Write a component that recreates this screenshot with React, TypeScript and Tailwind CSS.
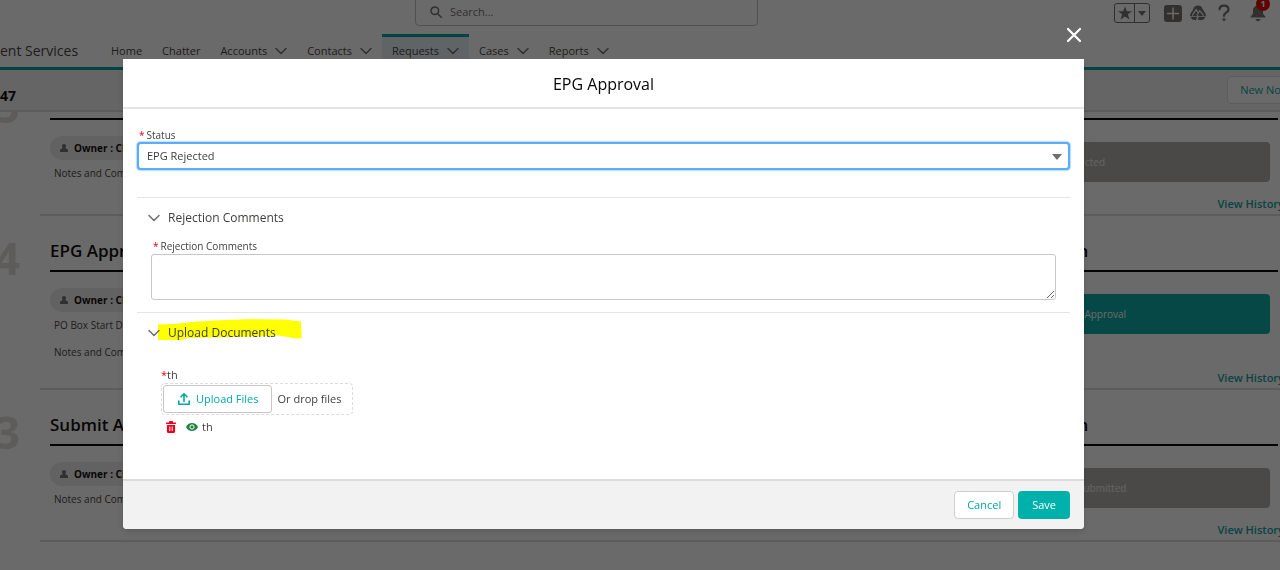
import type { ReactNode } from 'react';

const navItems = [
  { label: 'Home', menu: false },
  { label: 'Chatter', menu: false },
  { label: 'Accounts', menu: true },
  { label: 'Contacts', menu: true },
  { label: 'Requests', menu: true, active: true },
  { label: 'Cases', menu: true },
  { label: 'Reports', menu: true },
];

const steps = [
  { no: 5, title: 'EPG Review', notes: ['Notes and Comments'], action: 'Rejected', done: true },
  {
    no: 4,
    title: 'EPG Approval',
    notes: ['PO Box Start Date', 'Notes and Comments'],
    action: 'Pending Approval',
    done: false,
  },
  { no: 3, title: 'Submit Application', notes: ['Notes and Comments'], action: 'Details Submitted', done: true },
];

function Chevron({ className }: { className?: string }) {
  return (
    <svg viewBox="0 0 12 8" className={className} fill="none" stroke="currentColor" strokeWidth="1.5" strokeLinecap="round" strokeLinejoin="round">
      <path d="M1 1.5l5 5 5-5" />
    </svg>
  );
}

function SearchIcon() {
  return (
    <svg viewBox="0 0 12 12" className="size-3 shrink-0 text-[#706e6b]" fill="none" stroke="currentColor" strokeWidth="1.5" strokeLinecap="round">
      <circle cx="4.8" cy="4.8" r="3.8" />
      <path d="M7.8 7.8l3.4 3.4" />
    </svg>
  );
}

function HeaderIcons() {
  return (
    <div className="ml-auto flex items-center gap-2 pt-[3px] pr-3.5 text-[#706e6b]">
      <div className="mr-1.5 flex h-5 w-9 rounded-[3px] border border-[#706e6b]">
        <button aria-label="Favorite" className="flex flex-1 items-center justify-center border-r border-[#706e6b]">
          <svg viewBox="0 0 24 24" className="size-3.5" fill="currentColor">
            <path d="M12 .8l3.2 8H24l-7 5.4 2.7 9L12 17.9l-7.7 5.3 2.7-9-7-5.4h8.8z" />
          </svg>
        </button>
        <button aria-label="Favorites list" className="flex w-3.5 items-center justify-center">
          <svg viewBox="0 0 8 5" className="h-[5px] w-2" fill="currentColor">
            <path d="M0 0h8L4 5z" />
          </svg>
        </button>
      </div>
      <button aria-label="Add">
        <svg viewBox="0 0 18 17" className="h-[17px] w-[18px]">
          <rect width="18" height="17" rx="3" fill="currentColor" />
          <path d="M9 3v11M3.5 8.5h11" stroke="#fff" strokeWidth="1.5" strokeLinecap="round" />
        </svg>
      </button>
      <button aria-label="Guidance">
        <svg viewBox="0 0 16 16" className="size-4">
          <path d="M8 .5c2.6 0 4 1.3 4.8 3.7.5 1.7 2.6 3 3 5.3.1.8.1 1.3 0 1.7H.2c-.1-.4-.1-.9 0-1.7.4-2.3 2.5-3.6 3-5.3C4 1.800 5.400.5 8 .5z" fill="currentColor" />
          <path d="M2.2 10.6l3.9-6 2.1 3.4 1.5-2.3 4 4.9" fill="none" stroke="#fff" strokeWidth="1.1" />
          <path d="M8.2 8l-1.4 2.1 2 1-1.300 1.800" fill="none" stroke="#fff" strokeWidth=".9" />
          <path d="M.8 12h6.3l-1.3 3.3c-2.5 0-4.4-1.1-5-3.3zM15.200 12H8.700l-1.300 2.200 2.800 1.100c2.500 0 4.400-1.100 5-3.300z" fill="currentColor" />
        </svg>
      </button>
      <button aria-label="Help" className="mx-1">
        <svg viewBox="0 0 12 18" className="h-[18px] w-3" fill="none" stroke="currentColor" strokeWidth="2.2" strokeLinecap="round">
          <path d="M1.5 5.3C1.5 3 3.4 1.7 6 1.7s4.5 1.5 4.5 3.7C10.5 8.5 6 8.4 6 12" />
          <circle cx="6" cy="15.5" r=".5" fill="currentColor" />
        </svg>
      </button>
      <button aria-label="Notifications" className="relative ml-2">
        <svg viewBox="0 0 16 17" className="h-[17px] w-4" fill="currentColor">
          <path d="M8 .5c3 0 5 2.200 5 5v2.700c0 1.600 2.500 2 2.500 4.300H.5c0-2.300 2.500-2.700 2.500-4.300V5.500c0-2.800 2-5 5-5zM5.600 14h4.800c-.2 1.300-1.200 2.200-2.400 2.200S5.800 15.300 5.600 14z" />
        </svg>
        <span className="absolute -top-2 left-1.5 flex size-3.5 items-center justify-center rounded-full bg-[#e00000] text-[9px] font-bold text-white">
          1
        </span>
      </button>
    </div>
  );
}

function Step({ step }: { step: (typeof steps)[number] }) {
  return (
    <li className="flex">
      <div className="flex w-10 shrink-0 justify-end pt-3 pr-5 text-[44px] leading-[60px] font-bold text-[#dddbda]">{step.no}</div>
      <div className="flex flex-1 flex-col border-b-2 border-[#dddbda] pl-2.5">
        <div className="flex pt-[22px]">
          <div className="flex-1">
            <h2 className="border-b-2 border-black pb-1.5 text-[17px] leading-[26px] font-semibold">{step.title}</h2>
            <div className="mt-4 flex h-6 w-60 items-center gap-1.5 rounded-full bg-[#ecebea] pl-2.5 text-[10px] font-bold">
              <svg viewBox="0 0 8 8" className="size-2" fill="#706e6b">
                <path d="M4 0c1.3 0 2 .9 2 2.1 0 .9-.4 1.6-.9 2C6.5 4.6 8 5.2 8 6.5V8H0V6.5c0-1.3 1.5-1.9 2.9-2.4-.5-.4-.9-1.1-.9-2C2 .9 2.7 0 4 0z" />
              </svg>
              Owner : Client Services
            </div>
            <div className="flex flex-col pb-0.5 pl-1 text-[10px] leading-[27px] text-[#3e3e3c]">
              {step.notes.map((note) => (
                <p key={note}>{note}</p>
              ))}
            </div>
          </div>
          <div className="mr-0.5 w-[386px] pb-3">
            <h2 className="border-b-2 border-black pb-1.5 pl-36 text-[17px] leading-[26px] font-semibold">Action</h2>
            <div className="mt-[22px] px-2">
              <button className={`h-10 w-full rounded text-[10px] ${step.done ? 'bg-[#b0adab] text-[#eeeeee]' : 'bg-[#00aaa6] text-white'}`}>
                {step.action}
              </button>
            </div>
          </div>
        </div>
        <a href="#history" className="-mr-1 mt-auto self-end text-[11px] leading-5 font-semibold text-[#00a19c]">
          View History
        </a>
      </div>
    </li>
  );
}

function Label({ htmlFor, children }: { htmlFor: string; children: ReactNode }) {
  return (
    <label htmlFor={htmlFor} className="flex gap-0.5 pl-0.5 text-[10px] leading-[14px] text-[#3e3e3c]">
      <span className="text-[#e0001b]">*</span>
      {children}
    </label>
  );
}

function ApprovalDialog() {
  return (
    <div role="dialog" aria-label="EPG Approval" className="relative flex flex-col rounded-b bg-white shadow-md">
      <button aria-label="Close" className="absolute -top-8 right-0.5 text-white">
        <svg viewBox="0 0 16 16" className="size-4" fill="none" stroke="currentColor" strokeWidth="2.2" strokeLinecap="round">
          <path d="M2 2l12 12M14 2L2 14" />
        </svg>
      </button>
      <header className="border-b-2 border-[#e5e5e5] pt-[13px] pb-[11px]">
        <h1 className="text-center text-[16px] leading-6 text-[#080707]">EPG Approval</h1>
      </header>

      <div className="px-3.5 pt-[19px] pb-10">
        <Label htmlFor="status">Status</Label>
        <div className="relative">
          <select
            id="status"
            className="block h-7 w-full appearance-none rounded border-2 border-[#58aef7] bg-white px-2 text-[11px] text-[#3e3e3c] shadow-[0_0_2px_#1589ee] outline-none"
          >
            <option>EPG Rejected</option>
          </select>
          <svg viewBox="0 0 10 6" className="pointer-events-none absolute top-3 right-2 h-1.5 w-2.5" fill="#706e6b">
            <path d="M0 0h10L5 6z" />
          </svg>
        </div>

        <section className="mt-[27px] border-t border-[#e5e5e5] px-3.5 pt-2.5 pb-3">
          <h2>
            <button className="-ml-[3px] flex items-center gap-2 text-[12px] leading-5 text-[#3e3e3c]">
              <Chevron className="h-2 w-3 text-[#706e6b]" />
              Rejection Comments
            </button>
          </h2>
          <div className="pt-[11px]">
            <Label htmlFor="comments">Rejection Comments</Label>
            <textarea id="comments" className="mt-px block h-[46px] w-full rounded-[3px] border border-[#c9c7c5] outline-none" />
          </div>
        </section>

        <section className="border-t border-[#e5e5e5] px-3.5 pt-2.5">
          <h2 className="relative">
            <svg viewBox="0 0 144 22" className="absolute -top-1 left-[7px] h-[22px] w-36" fill="#ffff00">
              <path d="M0 5.5l19-.7L33 3l24-1.6L88 .2l39 .2L143 2.5l.7 16.8-6 .3-17-3-21 .8-70 1.5-6 2H0z" />
            </svg>
            <button className="relative -ml-[3px] flex items-center gap-2 text-[12px] leading-5 text-[#3e3e3c]">
              <Chevron className="h-2 w-3 text-[#706e6b]" />
              Upload Documents
            </button>
          </h2>
          <div className="flex flex-col items-start pt-6 pl-2.5 text-[11px] text-[#3e3e3c]">
            <p className="leading-4">
              <span className="text-[#e0001b]">*</span>th
            </p>
            <div className="flex items-center rounded-sm border border-dashed border-[#dddbda] p-px pr-2.5">
              <button className="flex h-7 items-center gap-1.5 rounded-[3px] border border-[#c9c7c5] px-3.5 pr-3 text-[11px] text-[#00a9a5]">
                <svg viewBox="0 0 12 12" className="size-3" fill="none" stroke="currentColor" strokeWidth="1.6" strokeLinecap="round" strokeLinejoin="round">
                  <path d="M.8 8v3.2h10.4V8M6 8.5V1M3 3.8l3-3 3 3" />
                </svg>
                Upload Files
              </button>
              <span className="pl-1.5">Or drop files</span>
            </div>
            <div className="flex h-6 items-center gap-1 pl-[5px]">
              <button aria-label="Delete file" className="mr-1.5">
                <svg viewBox="0 0 10 12" className="h-3 w-2.5" fill="#ea001e">
                  <path d="M3 1.5V.8c0-.4.3-.8.8-.8h2.4c.5 0 .8.4.8.8v.7h2.600c.2 0 .4.2.4.4v.7c0 .2-.2.4-.4.4H.4C.2 3 0 2.800 0 2.600v-.7c0-.2.2-.4.4-.4zM.9 4h8.200v6.800c0 .7-.5 1.200-1.200 1.200H2.100C1.400 12 .9 11.500.9 10.800zM3.300 5.500v4.500h1V5.500zm2.400 0v4.500h1V5.500z" fillRule="evenodd" />
                </svg>
              </button>
              <svg viewBox="0 0 12 8" className="h-2 w-3">
                <path d="M0 4C1.2 1.5 3.4 0 6 0s4.8 1.5 6 4c-1.200 2.500-3.400 4-6 4S1.200 6.500 0 4z" fill="#1f8342" />
                <circle cx="6" cy="4" r="2.1" fill="none" stroke="#fff" strokeWidth="1" />
              </svg>
              <span>th</span>
            </div>
          </div>
        </section>
      </div>

      <footer className="flex justify-end gap-1 rounded-b border-t-2 border-[#dddbda] bg-[#f3f2f2] px-3.5 py-2.5 text-[11px]">
        <button className="h-7 rounded border border-[#d0cecc] bg-white px-3 text-[#00a9a5]">Cancel</button>
        <button className="h-7 rounded bg-[#00b0ab] px-3.5 text-white">Save</button>
      </footer>
    </div>
  );
}

export default function App() {
  return (
    <div className="relative flex h-screen flex-col overflow-hidden bg-white font-['Open_Sans','Noto_Sans',sans-serif] text-[#080707]">
      <header className="relative z-10 border-b-[3px] border-[#00a19c] bg-white">
        <div className="flex h-[34px] items-start">
          <div className="w-[415px]" />
          <label className="-mt-1 flex h-[30px] w-[343px] items-center gap-2 rounded border border-[#c0bebc] pt-0.5 pl-3.5">
            <SearchIcon />
            <input type="search" aria-label="Search" placeholder="Search..." className="min-w-0 flex-1 text-[11px] outline-none placeholder:text-[#706e6b]" />
          </label>
          <HeaderIcons />
        </div>
        <nav className="flex h-[33px] items-stretch text-[11px] text-[#3e3e3c]">
          <span className="flex w-[101px] items-center text-[14px]">ent Services</span>
          {navItems.map((item) => (
            <a
              key={item.label}
              href="#nav"
              className={`flex items-center gap-2 border-t-[3px] px-2.5 pb-0.5 ${item.active ? 'border-[#00a19c] bg-[#e4f0f4]' : 'border-transparent'}`}
            >
              {item.label}
              {item.menu && <Chevron className="h-2 w-3 text-[#706e6b]" />}
            </a>
          ))}
        </nav>
      </header>

      <div className="relative z-10 flex h-[42px] shrink-0 items-center justify-between border-b-2 border-[#dddbda] bg-[#f3f3f3]">
        <span className="pt-3 text-[14px] leading-5 font-bold">47</span>
        <button className="-mr-6 h-7 rounded border border-[#dddbda] bg-white px-3 text-[11px] text-[#00a19c]">New Note</button>
      </div>

      <ol className="-mt-12 flex flex-col">
        {steps.map((step) => (
          <Step key={step.no} step={step} />
        ))}
      </ol>

      <div className="fixed inset-0 z-20 bg-[#080707]/60 pt-[59px] pr-[196px] pl-[123px]">
        <ApprovalDialog />
      </div>
    </div>
  );
}
